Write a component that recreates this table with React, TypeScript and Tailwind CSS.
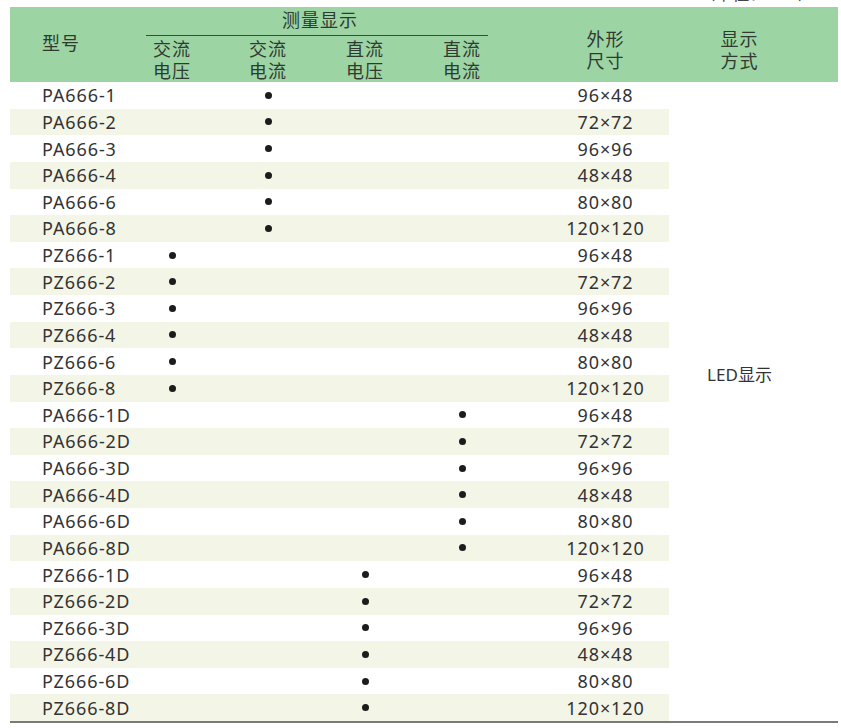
import React from "react";

type Row = { model: string; col: 0 | 1 | 2 | 3; size: string };

const SIZES = ["96×48", "72×72", "96×96", "48×48", "80×80", "120×120"];
const SUFFIX = ["1", "2", "3", "4", "6", "8"];

// PA = AC current, PZ = AC voltage, PA..D = DC current, PZ..D = DC voltage
const GROUPS: { prefix: string; tail: string; col: 0 | 1 | 2 | 3 }[] = [
  { prefix: "PA666-", tail: "", col: 1 },
  { prefix: "PZ666-", tail: "", col: 0 },
  { prefix: "PA666-", tail: "D", col: 3 },
  { prefix: "PZ666-", tail: "D", col: 2 },
];

const ROWS: Row[] = GROUPS.flatMap((g) =>
  SUFFIX.map((s, i) => ({ model: g.prefix + s + g.tail, col: g.col, size: SIZES[i] })),
);

const FONT = "font-['Noto_Sans','Noto_Sans_CJK_SC',sans-serif]";

function Dot() {
  return <span className="inline-block size-[7px] rounded-full bg-[#1c1c1c]" />;
}

export default function App() {
  return (
    <div className={`h-[728px] w-[841px] overflow-hidden bg-white text-[#333] ${FONT}`}>
      {/* unit caption, cut off by the top edge */}
      <div className="flex h-[7px] justify-end overflow-hidden pr-[26px]">
        <span className="-mt-[17px] whitespace-nowrap text-[17px] leading-[22px] text-[#444]">（单位：mm）</span>
      </div>

      {/* header */}
      <div className="ml-[10px] grid h-[75px] w-[828px] grid-cols-[114px_96px_96px_98px_96px_159px_169px] grid-rows-[29px_46px] bg-[#9dd4a4] text-[18px] leading-[22px] text-[#2f3a31]">
        <div className="row-span-2 pl-[32px] pt-[25px] tracking-[1px]">型号</div>
        <div className="col-span-4 mx-[22px] flex items-center justify-center border-b-[1.5px] border-[#3d4a3f] pb-[2px] pl-[6px] tracking-[1px]">
          测量显示
        </div>
        <div className="row-span-2 col-start-6 pl-[32px] pt-[21px] text-center tracking-[1px]">
          外形
          <br />
          尺寸
        </div>
        <div className="row-span-2 col-start-7 pr-[28px] pt-[21px] text-center tracking-[1px]">
          显示
          <br />
          方式
        </div>
        {[
          ["交流", "电压"],
          ["交流", "电流"],
          ["直流", "电压"],
          ["直流", "电流"],
        ].map(([a, b], i) => (
          <div key={i} className="row-start-2 pt-[2px] text-center tracking-[1px]" style={{ gridColumnStart: i + 2 }}>
            {a}
            <br />
            {b}
          </div>
        ))}
      </div>

      {/* body */}
      <div className="ml-[10px] flex w-[828px]">
        <div className="w-[659px]">
          {ROWS.map((r, i) => (
            <div
              key={r.model}
              className={`grid h-[26.625px] grid-cols-[114px_96px_96px_98px_96px_159px] items-center whitespace-nowrap text-[18px] leading-none tracking-[0.9px] ${
                i % 2 === 1 ? "bg-[#f3f5e7]" : ""
              }`}
            >
              <div className="pl-[32px]">{r.model}</div>
              {[0, 1, 2, 3].map((c) => (
                <div key={c} className="flex justify-center">
                  {r.col === c && <Dot />}
                </div>
              ))}
              <div className="pl-[32px] text-center">{r.size}</div>
            </div>
          ))}
        </div>
        <div className="flex-1 whitespace-nowrap pr-[28px] pt-[282px] text-center text-[17px] leading-[22px]">LED显示</div>
      </div>
      <div className="ml-[10px] h-[2px] w-[828px] bg-[#7a7a7a]" />
    </div>
  );
}
